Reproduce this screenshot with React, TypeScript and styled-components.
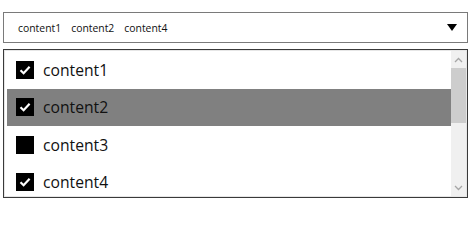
import { createGlobalStyle, styled } from "styled-components";

const items = [
  { label: "content1", checked: true },
  { label: "content2", checked: true },
  { label: "content3", checked: false },
  { label: "content4", checked: true },
];

export default function App() {
  const selected = items.filter((i) => i.checked).map((i) => i.label);
  return (
    <>
      <Global />
      <Wrap>
        <Combo>
          <Chips>
            {selected.map((s) => (
              <Chip key={s}>{s}</Chip>
            ))}
          </Chips>
          <Caret />
        </Combo>
        <Popup>
          <List>
            {items.map((item, i) => (
              <Row key={item.label} $active={i === 1}>
                <Box>
                  {item.checked && (
                    <svg width="12" height="10" viewBox="0 0 12 10">
                      <path
                        d="M1.5 5.2 L4.6 8.2 L10.6 1.8"
                        fill="none"
                        stroke="#fff"
                        strokeWidth="2.2"
                      />
                    </svg>
                  )}
                </Box>
                <Label>{item.label}</Label>
              </Row>
            ))}
          </List>
          <ScrollBar>
            <Arrow>
              <svg width="9" height="6" viewBox="0 0 9 6">
                <path d="M1 5 L4.5 1.5 L8 5" fill="none" stroke="#a6a6a6" strokeWidth="1.3" />
              </svg>
            </Arrow>
            <Track>
              <Thumb />
            </Track>
            <Arrow>
              <svg width="9" height="6" viewBox="0 0 9 6">
                <path d="M1 1 L4.5 4.5 L8 1" fill="none" stroke="#a6a6a6" strokeWidth="1.3" />
              </svg>
            </Arrow>
          </ScrollBar>
        </Popup>
      </Wrap>
    </>
  );
}

const Global = createGlobalStyle`
  * { box-sizing: border-box; }
  body {
    margin: 0;
    background: #ffffff;
    font-family: "Open Sans", "Noto Sans", sans-serif;
  }
`;

const Wrap = styled.div`
  width: 474px;
  height: 207px;
  padding: 12px 6px 0 3px;
  display: flex;
  flex-direction: column;
  gap: 6px;
`;

const Combo = styled.div`
  height: 31px;
  border: 1px solid #7a7a7a;
  display: flex;
  align-items: center;
  justify-content: space-between;
  padding: 0 10px 0 14px;
`;

const Chips = styled.div`
  display: flex;
  gap: 10px;
  padding-top: 1px;
`;

const Chip = styled.span`
  font-size: 10.4px;
  color: #111;
`;

const Caret = styled.div`
  width: 0;
  height: 0;
  border-left: 5.5px solid transparent;
  border-right: 5.5px solid transparent;
  border-top: 7px solid #000;
`;

const Popup = styled.div`
  height: 149px;
  border: 1px solid #3a3a3a;
  box-shadow: inset 0 0 0 1px #e6e6e6;
  display: flex;
  overflow: hidden;
`;

const List = styled.div`
  flex: 1;
  padding: 1px 0 0 3px;
  display: flex;
  flex-direction: column;
`;

const Row = styled.div<{ $active: boolean }>`
  flex: 0 0 37.5px;
  display: flex;
  align-items: center;
  gap: 9px;
  padding-left: 9px;
  background: ${(p) => (p.$active ? "#808080" : "transparent")};
`;

const Box = styled.div`
  width: 18px;
  height: 18px;
  background: #000;
  display: flex;
  align-items: center;
  justify-content: center;
`;

const Label = styled.span`
  font-size: 15.7px;
  color: #111;
`;

const ScrollBar = styled.div`
  width: 15px;
  margin: 1px 1px 1px 0;
  background: #f0f0f0;
  display: flex;
  flex-direction: column;
`;

const Arrow = styled.div`
  height: 17px;
  display: flex;
  align-items: center;
  justify-content: center;
`;

const Track = styled.div`
  flex: 1;
`;

const Thumb = styled.div`
  height: 55px;
  background: #cdcdcd;
`;
